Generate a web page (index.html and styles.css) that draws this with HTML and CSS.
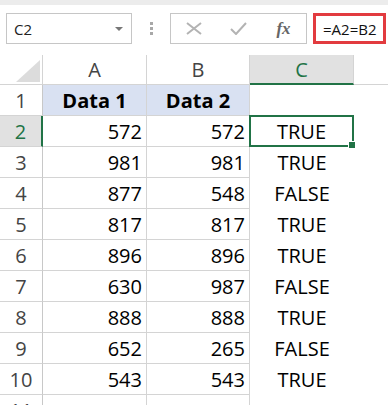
FILE: index.html
```html
<!DOCTYPE html>
<html lang="en">
<head>
    <meta charset="UTF-8">
    <meta name="viewport" content="width=device-width, initial-scale=1.0">
    <title>Compare columns</title>
    <link rel="stylesheet" href="styles.css">
</head>
<body>
    <div class="ribbon-edge"></div>

    <div class="formula-bar">
        <div class="name-box">
            <span>C2</span>
            <span class="caret"></span>
        </div>
        <div class="grip"><i></i><i></i><i></i></div>
        <div class="fx-buttons">
            <span class="slot">
                <svg width="16" height="13" viewBox="0 0 16 13"><path d="M1 1 L15 12 M15 1 L1 12" stroke="#b3b3b3" stroke-width="2" fill="none"/></svg>
            </span>
            <span class="slot">
                <svg width="17" height="13" viewBox="0 0 17 13"><path d="M1 7 L6 12 L16 1" stroke="#b3b3b3" stroke-width="2" fill="none"/></svg>
            </span>
            <span class="slot fx">fx</span>
        </div>
        <div class="formula">=A2=B2</div>
    </div>

    <div class="sheet">
        <!-- column headers -->
        <div class="corner">
            <svg width="43" height="30" viewBox="0 0 43 30"><polygon points="40,5 40,27 16,27" fill="#dcdcdc"/></svg>
        </div>
        <div class="col-head">A</div>
        <div class="col-head">B</div>
        <div class="col-head active">C</div>
        <div class="col-head last"></div>

        <div class="row-head">1</div>
        <div class="cell title">Data 1</div>
        <div class="cell title">Data 2</div>
        <div class="blank"></div>
        <div class="blank"></div>

        <div class="row-head active">2</div>
        <div class="cell num">572</div>
        <div class="cell num">572</div>
        <div class="blank result selected">TRUE</div>
        <div class="blank"></div>

        <div class="row-head">3</div>
        <div class="cell num">981</div>
        <div class="cell num">981</div>
        <div class="blank result">TRUE</div>
        <div class="blank"></div>

        <div class="row-head">4</div>
        <div class="cell num">877</div>
        <div class="cell num">548</div>
        <div class="blank result">FALSE</div>
        <div class="blank"></div>

        <div class="row-head">5</div>
        <div class="cell num">817</div>
        <div class="cell num">817</div>
        <div class="blank result">TRUE</div>
        <div class="blank"></div>

        <div class="row-head">6</div>
        <div class="cell num">896</div>
        <div class="cell num">896</div>
        <div class="blank result">TRUE</div>
        <div class="blank"></div>

        <div class="row-head">7</div>
        <div class="cell num">630</div>
        <div class="cell num">987</div>
        <div class="blank result">FALSE</div>
        <div class="blank"></div>

        <div class="row-head">8</div>
        <div class="cell num">888</div>
        <div class="cell num">888</div>
        <div class="blank result">TRUE</div>
        <div class="blank"></div>

        <div class="row-head">9</div>
        <div class="cell num">652</div>
        <div class="cell num">265</div>
        <div class="blank result">FALSE</div>
        <div class="blank"></div>

        <div class="row-head">10</div>
        <div class="cell num">543</div>
        <div class="cell num">543</div>
        <div class="blank result">TRUE</div>
        <div class="blank"></div>

        <div class="row-head">11</div>
        <div class="cell"></div>
        <div class="cell"></div>
        <div class="blank"></div>
        <div class="blank"></div>
    </div>
</body>
</html>
```

FILE: styles.css
```css
* {
    box-sizing: border-box;
}
body {
    margin: 0;
    padding: 0;
    width: 388px;
    height: 405px;
    overflow: hidden;
    background-color: #fff;
    font-family: "Open Sans", "Liberation Sans", sans-serif;
    color: #000;
}
.ribbon-edge {
    height: 5px;
    background-color: #ececec;
}

/* formula bar */
.formula-bar {
    display: flex;
    height: 31px;
    margin-top: 8px;
    padding-left: 6px;
}
.name-box {
    width: 126px;
    border: 1px solid #c6c6c6;
    display: flex;
    align-items: center;
    justify-content: space-between;
    padding: 0 8px 0 7px;
    font-size: 15px;
    color: #222;
}
.caret {
    width: 0;
    height: 0;
    border-left: 4px solid transparent;
    border-right: 4px solid transparent;
    border-top: 4px solid #777;
}
.grip {
    width: 38px;
    display: flex;
    flex-direction: column;
    align-items: center;
    justify-content: center;
    gap: 2px;
}
.grip i {
    width: 3px;
    height: 3px;
    background-color: #a8a8a8;
}
.fx-buttons {
    width: 137px;
    border: 1px solid #c6c6c6;
    display: flex;
    align-items: center;
}
.slot {
    width: 45px;
    display: flex;
    justify-content: center;
    align-items: center;
}
.fx {
    font-family: "Liberation Serif", serif;
    font-style: italic;
    font-weight: bold;
    font-size: 17px;
    color: #666;
}
.formula {
    width: 73px;
    margin-left: 6px;
    border: 3px solid #e23b3f;
    display: flex;
    align-items: center;
    padding-left: 7px;
    font-size: 15px;
    color: #111;
}

/* sheet grid */
.sheet {
    margin-top: 11px;
    display: grid;
    grid-template-columns: 43px 104px 103px 104px 1fr;
    grid-template-rows: 30px;
    grid-auto-rows: 31px;
    font-size: 20px;
}
.corner {
    border-right: 1px solid #d4d4d4;
    border-bottom: 1px solid #d4d4d4;
}
.corner svg {
    display: block;
}
.col-head {
    display: flex;
    align-items: center;
    justify-content: center;
    color: #444;
    border-right: 1px solid #d4d4d4;
    border-bottom: 1px solid #d4d4d4;
}
.col-head.active {
    background-color: #e1e1e1;
    color: #217346;
    border-bottom: 2px solid #217346;
}
.col-head.last {
    border-right: none;
}
.row-head {
    display: flex;
    align-items: center;
    justify-content: center;
    color: #444;
    border-right: 1px solid #c8c8c8;
    border-bottom: 1px solid #d4d4d4;
}
.row-head.active {
    background-color: #e1e1e1;
    color: #217346;
    border-right: 2px solid #217346;
}
.cell {
    display: flex;
    align-items: center;
    border-right: 1px solid #d4d4d4;
    border-bottom: 1px solid #d4d4d4;
}
.cell.title {
    justify-content: center;
    font-weight: bold;
    background-color: #d9e1f2;
}
.cell.num {
    justify-content: flex-end;
    padding-right: 4px;
}
.blank {
    display: flex;
    align-items: center;
}
.result {
    justify-content: center;
}
.selected {
    position: relative;
    margin: -1px 0 0 -1px;
    border: 2px solid #217346;
}
.selected::after {
    content: "";
    position: absolute;
    right: -4px;
    bottom: -4px;
    width: 6px;
    height: 6px;
    background-color: #217346;
    border: 1px solid #fff;
}
```
